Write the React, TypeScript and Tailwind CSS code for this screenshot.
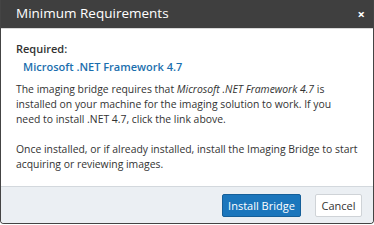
export default function App() {
  return (
    <div
      className="w-[374px] h-[225px] bg-white"
      style={{ fontFamily: '"Open Sans", "Liberation Sans", sans-serif' }}
    >
      <div className="flex flex-col h-[224px] border border-t-0 border-[#444] rounded-b-[4px] overflow-hidden">
        {/* Header */}
        <div className="h-[29px] shrink-0 bg-[#3f3f3f] flex items-center justify-between pl-[15px] pr-[8px] border-b border-[#d8d8d8]">
          <span className="text-[13.5px] text-white leading-none">Minimum Requirements</span>
          <span className="text-white text-[13px] font-bold leading-none">×</span>
        </div>

        {/* Body */}
        <div className="flex-1 pl-[15px] pr-[12px] pt-[12px] text-[11px] text-[#333] leading-[15px]">
          <div className="font-semibold">Required:</div>
          <a href="#" className="block mt-[3px] ml-[7px] font-semibold text-[#1b6fae]">
            Microsoft .NET Framework 4.7
          </a>
          <p className="mt-[8px] pr-[10px] text-[10.4px]">
            The imaging bridge requires that <i>Microsoft .NET Framework 4.7</i> is installed on your
            machine for the imaging solution to work. If you need to install .NET 4.7, click the link
            above.
          </p>
          <p className="mt-[15px] text-[10.4px]">
            Once installed, or if already installed, install the Imaging Bridge to start acquiring or
            reviewing images.
          </p>
        </div>

        {/* Footer */}
        <div className="h-[37px] shrink-0 bg-[#ebeff3] border-t border-[#d3d8dd] flex items-center justify-end gap-[14px] pr-[11px]">
          <button className="h-[23px] w-[79px] rounded-[2px] bg-[#1b76bc] border border-[#155f99] text-white text-[11px] leading-none">
            Install Bridge
          </button>
          <button className="h-[23px] w-[47px] rounded-[2px] bg-white border border-[#cfd3d7] text-[#333] text-[11px] leading-none">
            Cancel
          </button>
        </div>
      </div>
    </div>
  );
}
